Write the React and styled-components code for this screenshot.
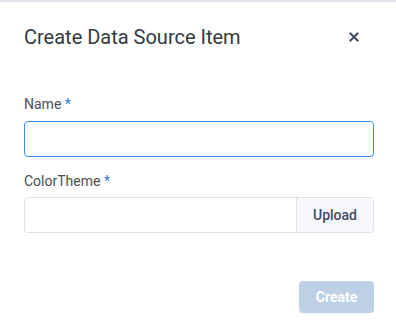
import styled, { createGlobalStyle } from "styled-components";

const Global = createGlobalStyle`
  body {
    margin: 0;
    background: #fff;
    font-family: Roboto, "Liberation Sans", sans-serif;
  }
`;

const Modal = styled.div`
  width: 396px;
  height: 336px;
  box-sizing: border-box;
  border-top: 2px solid #dfe4ec;
  background: #fff;
  display: flex;
  flex-direction: column;
`;

const Header = styled.div`
  display: flex;
  align-items: center;
  justify-content: space-between;
  padding: 21px 24px 0 24px;
  height: 28px;
`;

const Title = styled.h5`
  margin: 0;
  font-size: 20px;
  font-weight: 400;
  color: #343a40;
  line-height: 28px;
`;

const Close = styled.button`
  border: 0;
  background: none;
  padding: 0;
  width: 12px;
  height: 12px;
  margin-right: 12px;
  display: flex;
  align-items: center;
  justify-content: center;
  cursor: pointer;
`;

const Body = styled.div`
  padding: 43px 22px 0 24px;
  display: flex;
  flex-direction: column;
`;

const Field = styled.div`
  display: flex;
  flex-direction: column;
  margin-bottom: ${(p) => p.$gap || 0}px;
`;

const Label = styled.label`
  font-size: 14px;
  color: #495057;
  line-height: 20px;
  margin-bottom: ${(p) => p.$space || 7}px;
`;

const Star = styled.span`
  color: #2f7bd8;
`;

const Input = styled.input`
  box-sizing: border-box;
  height: 36px;
  width: 100%;
  border: 1px solid ${(p) => (p.$focus ? "#3a8ef0" : "#dde2ea")};
  border-radius: 4px;
  padding: 0 10px;
  font-family: inherit;
  font-size: 14px;
  outline: none;
  background: #fff;
`;

const Group = styled.div`
  display: flex;
  height: 36px;
  box-sizing: border-box;
  border: 1px solid #dde2ea;
  border-radius: 4px;
  overflow: hidden;
`;

const GroupInput = styled.input`
  flex: 1;
  min-width: 0;
  border: 0;
  outline: none;
  padding: 0 10px;
  font-family: inherit;
`;

const Upload = styled.button`
  width: 77px;
  border: 0;
  border-left: 1px solid #dde2ea;
  background: #f6f8fb;
  color: #3f4d60;
  font-family: inherit;
  font-size: 14px;
  font-weight: 500;
  padding: 0;
`;

const Footer = styled.div`
  display: flex;
  justify-content: flex-end;
  padding: 0 22px 0 24px;
  margin-top: 48px;
`;

const Primary = styled.button`
  width: 75px;
  height: 32px;
  border: 0;
  border-radius: 4px;
  background: #bdd0e6;
  color: #fff;
  font-family: inherit;
  font-size: 14px;
  font-weight: 700;
  padding: 0;
`;

export default function App() {
  return (
    <>
      <Global />
      <Modal>
        <Header>
          <Title>Create Data Source Item</Title>
          <Close aria-label="close">
            <svg width="10" height="10" viewBox="0 0 10 10">
              <path d="M1.5 1.5 L8.5 8.5 M8.5 1.5 L1.5 8.5" stroke="#3f4d60" strokeWidth="2" strokeLinecap="square" />
            </svg>
          </Close>
        </Header>
        <Body>
          <Field $gap={14}>
            <Label>
              Name <Star>*</Star>
            </Label>
            <Input $focus />
          </Field>
          <Field>
            <Label $space={6}>
              ColorTheme <Star>*</Star>
            </Label>
            <Group>
              <GroupInput />
              <Upload>Upload</Upload>
            </Group>
          </Field>
        </Body>
        <Footer>
          <Primary disabled>Create</Primary>
        </Footer>
      </Modal>
    </>
  );
}
